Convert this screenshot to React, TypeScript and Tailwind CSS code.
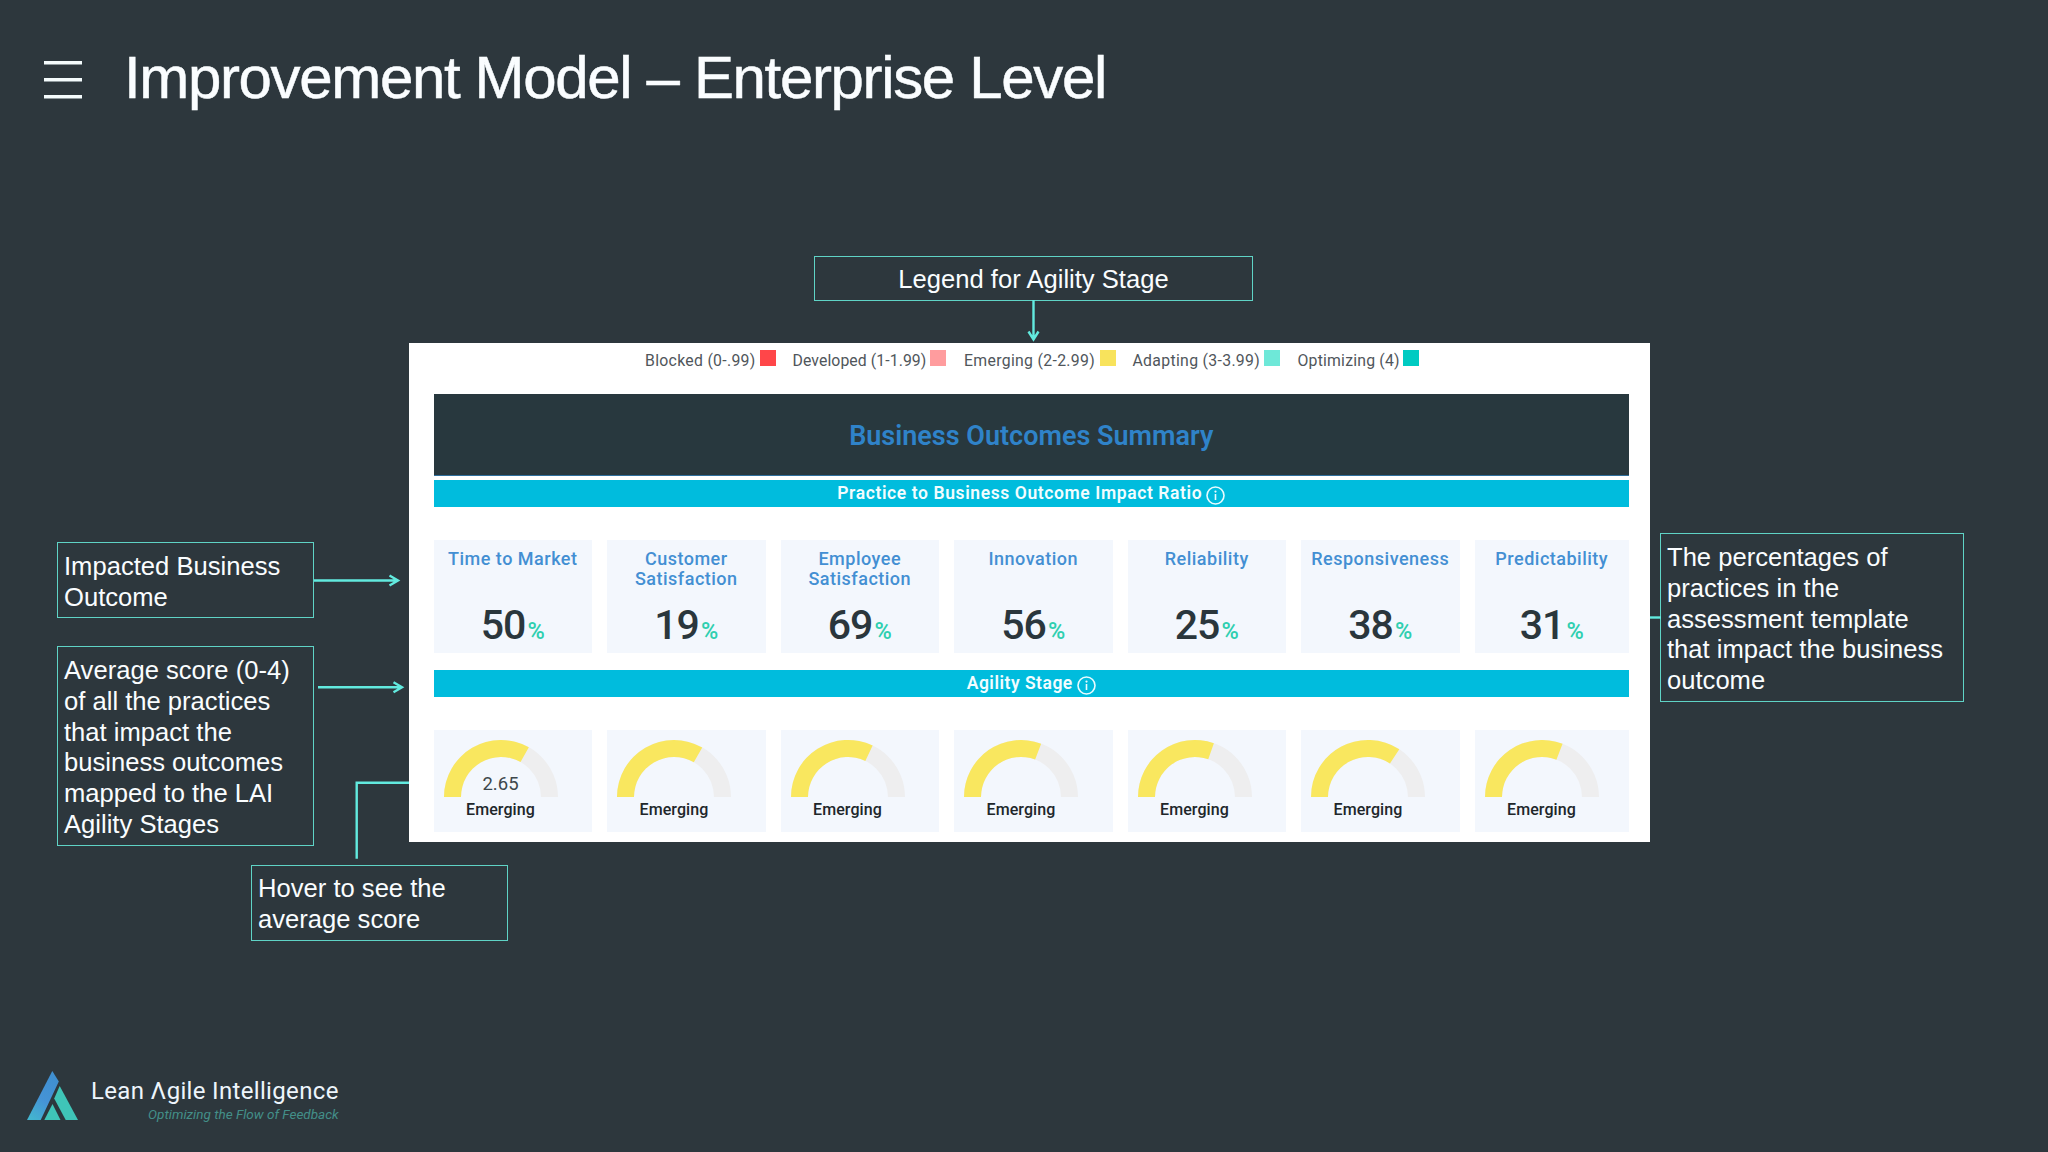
import { clsx } from "clsx";
import type { ReactNode } from "react";

const STAGES = [
  { label: "Blocked (0-.99)", swatch: "bg-[#ff4649]", text: "w-[110px]", slot: "w-[147.5px]", tracking: "tracking-[0.3px]" },
  { label: "Developed (1-1.99)", swatch: "bg-[#ff9c9e]", text: "w-[133px]", slot: "w-[171.5px]", tracking: "tracking-[0.08px]" },
  { label: "Emerging (2-2.99)", swatch: "bg-[#f8e35c]", text: "w-[131px]", slot: "w-[168.5px]", tracking: "tracking-[0.32px]" },
  { label: "Adapting (3-3.99)", swatch: "bg-[#6ee8d8]", text: "w-[127px]", slot: "w-[165px]", tracking: "tracking-[0.32px]" },
  { label: "Optimizing (4)", swatch: "bg-[#00cbc2]", text: "w-[101px]", slot: "w-[122px]", tracking: "tracking-[0.2px]" },
];

const OUTCOMES = [
  { name: "Time to Market", percent: 50, score: 2.65, hovered: true },
  { name: "Customer Satisfaction", percent: 19, score: 2.66 },
  { name: "Employee Satisfaction", percent: 69, score: 2.57 },
  { name: "Innovation", percent: 56, score: 2.46 },
  { name: "Reliability", percent: 25, score: 2.43 },
  { name: "Responsiveness", percent: 38, score: 2.74 },
  { name: "Predictability", percent: 31, score: 2.47 },
];

const CARD_GRID = "grid grid-cols-[repeat(6,158.5px)_154.5px] gap-x-[15px]";

function InfoIcon() {
  return (
    <svg viewBox="0 0 19 19" className="mt-[3px] size-[19px] shrink-0" fill="none" aria-hidden>
      <circle cx="9.5" cy="9.5" r="8.5" stroke="#e9fbff" strokeWidth="1.6" />
      <circle cx="9.5" cy="5.6" r="1.1" fill="#e9fbff" />
      <path d="M9.5 8v6" stroke="#e9fbff" strokeWidth="1.6" />
    </svg>
  );
}

function SectionBar({ children, className }: { children: ReactNode; className?: string }) {
  return (
    <div
      className={clsx(
        "flex h-[27px] items-center justify-center gap-[4px] bg-[#00bcdd] pt-px text-[17.5px] leading-none font-semibold text-[#f2fdff]",
        className,
      )}
    >
      <span>{children}</span>
      <InfoIcon />
    </div>
  );
}

function Gauge({ score }: { score: number }) {
  const angle = Math.PI * (1 - score / 4);
  const point = (r: number) =>
    `${(57 + r * Math.cos(angle)).toFixed(2)} ${(57 - r * Math.sin(angle)).toFixed(2)}`;

  return (
    <svg viewBox="0 0 114 57" className="block h-[57px] w-[114px]" aria-hidden>
      <path d="M0 57A57 57 0 0 1 114 57H97A40 40 0 0 0 17 57Z" fill="#eeeeef" />
      <path d={`M0 57A57 57 0 0 1 ${point(57)}L${point(40)}A40 40 0 0 0 17 57Z`} fill="#f9e75f" />
    </svg>
  );
}

function Callout({ children, className }: { children: ReactNode; className?: string }) {
  return (
    <div
      className={clsx(
        "absolute border border-[#5fd3c6] px-[6px] text-[25.6px] leading-[30.75px] text-[#fafdff]",
        className,
      )}
    >
      {children}
    </div>
  );
}

function Connectors() {
  return (
    <svg
      viewBox="0 0 2048 1152"
      className="pointer-events-none absolute inset-0 h-[1152px] w-[2048px]"
      fill="none"
      stroke="#62eadf"
      strokeWidth="2.4"
      aria-hidden
    >
      <path d="M1033.5 300V339M1028.5 331.5l5 8 5-8" />
      <path d="M314 580.5H398M389.5 575.5l8.5 5-8.5 5" />
      <path d="M318 687.3H402M393.5 682.3l8.5 5-8.5 5" />
      <path d="M409 782.7H356.7V858.7" />
      <path d="M1650 617.5H1661" />
    </svg>
  );
}

function Dashboard() {
  return (
    <section className="absolute top-[343px] left-[409px] flex h-[499px] w-[1241px] flex-col bg-white pl-[24.5px] font-[Roboto,sans-serif]">
      <div className="flex h-[51px] pt-[7px] pl-[211.5px]">
        {STAGES.map((stage) => (
          <div key={stage.label} className={clsx("flex shrink-0 gap-[4.5px]", stage.slot)}>
            <span
              className={clsx(
                "shrink-0 pt-[3px] text-[15.8px] leading-none whitespace-nowrap text-[#50565b]",
                stage.text,
                stage.tracking,
              )}
            >
              {stage.label}
            </span>
            <span className={clsx("size-4 shrink-0", stage.swatch)} />
          </div>
        ))}
      </div>

      <div className="w-[1195.5px]">
        <h2 className="flex h-[82px] items-center justify-center border-b border-[#2f6f9d] bg-[#28383e] pt-[4px] text-[27px] leading-none font-semibold text-[#2f83c9]">
          Business Outcomes Summary
        </h2>
        <SectionBar className="mt-1 tracking-[0.6px]">Practice to Business Outcome Impact Ratio</SectionBar>

        <div className={clsx("mt-[33px]", CARD_GRID)}>
          {OUTCOMES.map((outcome) => (
            <div key={outcome.name} className="flex h-[112.5px] flex-col items-center bg-[#f3f7fd] pt-[9px]">
              <h3 className="h-[54px] px-2 text-center text-[18px] leading-[20.3px] font-medium tracking-[0.5px] text-[#438fd3]">
                {outcome.name}
              </h3>
              <p className="flex items-baseline gap-[2px] text-[41px] leading-[44px] font-medium tracking-[-1px] text-[#2a363c]">
                {outcome.percent}
                <span className="text-[23.5px] leading-none tracking-normal text-[#2fcfb0]">%</span>
              </p>
            </div>
          ))}
        </div>

        <SectionBar className="mt-[17px] tracking-[0.5px]">Agility Stage</SectionBar>

        <div className={clsx("mt-[33px]", CARD_GRID)}>
          {OUTCOMES.map((outcome) => (
            <div key={outcome.name} className="h-[102px] bg-[#f3f7fd] pt-[10.5px] pl-[10px]">
              <div className="relative flex w-[114px] flex-col items-center">
                <Gauge score={outcome.score} />
                {outcome.hovered && (
                  <span className="absolute top-[35px] text-[18.5px] leading-none text-[#3d474c]">
                    {outcome.score}
                  </span>
                )}
                <span className="mt-[4.5px] text-[16px] leading-none font-medium tracking-[0.1px] text-[#20262a]">
                  Emerging
                </span>
              </div>
            </div>
          ))}
        </div>
      </div>
    </section>
  );
}

function Logo() {
  return (
    <div className="flex items-start gap-[13px]">
      <svg viewBox="0 0 51 49" className="h-[49px] w-[51px]" aria-hidden>
        <defs>
          <linearGradient id="leg" x1="0.7" y1="0" x2="0.2" y2="1">
            <stop offset="0" stopColor="#3f8fd0" />
            <stop offset="0.55" stopColor="#4593d6" />
            <stop offset="1" stopColor="#43b4cf" />
          </linearGradient>
        </defs>
        <path d="M25.3 0L31.8 10.5 13.7 49H0Z" fill="url(#leg)" />
        <path d="M32.7 15L51 49H38.7L27.2 27.5Z" fill="#3fc5b8" />
        <path d="M25.5 33L33.5 49H17.3Z" fill="#3fc5b8" />
      </svg>
      <div className="flex flex-col items-end pt-[8px] font-[Roboto,sans-serif]">
        <span className="text-[24px] leading-none tracking-[0.33px] text-[#edf5fc]">Lean Λgile Intelligence</span>
        <span className="mt-[5px] text-[13.5px] leading-none text-[#438f89] italic">Optimizing the Flow of Feedback</span>
      </div>
    </div>
  );
}

export default function App() {
  return (
    <main className="relative flex h-[1152px] w-[2048px] flex-col justify-between overflow-hidden bg-[#2d373d] font-['Liberation_Sans',Arial,sans-serif]">
      <header className="flex items-start pt-[43px] pl-[44px]">
        <div className="mt-[18px] flex w-[38px] flex-col gap-[13px]">
          <span className="h-1 border-b border-[#8f999d] bg-[#f4fbfc]" />
          <span className="h-1 border-b border-[#8f999d] bg-[#f4fbfc]" />
          <span className="h-1 border-b border-[#8f999d] bg-[#f4fbfc]" />
        </div>
        <h1 className="ml-[42px] text-[60px] leading-[70px] tracking-[-1.35px] text-[#fafdff] [-webkit-text-stroke:0.5px_#fafdff]">
          Improvement Model – Enterprise Level
        </h1>
      </header>

      <Dashboard />
      <Callout className="top-[256px] left-[814px] h-[45px] w-[439px] pt-[7px] text-center">Legend for Agility Stage</Callout>
      <Callout className="top-[542px] left-[57px] h-[76px] w-[257px] pt-[8px]">
        Impacted Business
        <br />
        Outcome
      </Callout>
      <Callout className="top-[646px] left-[57px] h-[200px] w-[257px] pt-[8px]">
        Average score (0-4)
        <br />
        of all the practices
        <br />
        that impact the
        <br />
        business outcomes
        <br />
        mapped to the LAI
        <br />
        Agility Stages
      </Callout>
      <Callout className="top-[865px] left-[251px] h-[76px] w-[257px] pt-[7px]">
        Hover to see the
        <br />
        average score
      </Callout>
      <Callout className="top-[533px] left-[1660px] h-[169px] w-[304px] pt-[8px]">
        The percentages of
        <br />
        practices in the
        <br />
        assessment template
        <br />
        that impact the business
        <br />
        outcome
      </Callout>
      <Connectors />

      <footer className="pb-[31px] pl-[27px]">
        <Logo />
      </footer>
    </main>
  );
}
